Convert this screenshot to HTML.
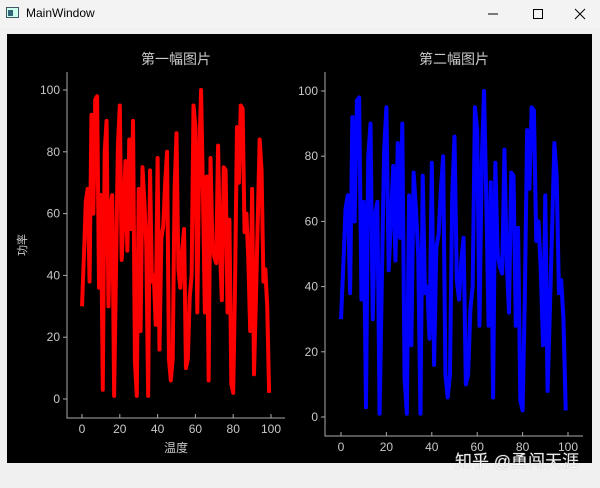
<!DOCTYPE html><html><head><style>
body{margin:0;width:600px;height:488px;background:#f0f0f0;font-family:"Liberation Sans","Noto Sans CJK SC",sans-serif;overflow:hidden;position:relative}
.tb{position:absolute;top:0;left:0;width:600px;height:28px;background:#f3f3f3}
.tt{position:absolute;left:26px;top:6px;font-size:12px;color:#000}
.wm{position:absolute;left:455px;top:447px;font-size:17px;color:#fff;white-space:nowrap;opacity:.92;text-shadow:0 0 1px #888}
</style></head><body>
<div class="tb"><svg style="position:absolute;left:6px;top:7px" width="14" height="12"><rect x="0.5" y="0.5" width="12" height="10" fill="#cfe" stroke="#456"/><rect x="2" y="3" width="5" height="6" fill="#367"/></svg><div class="tt">MainWindow</div>
<svg style="position:absolute;left:488px;top:6px" width="100" height="16"><line x1="0" y1="8" x2="10" y2="8" stroke="#000"/><rect x="45.5" y="3.5" width="9" height="9" fill="none" stroke="#000"/><path d="M87 3l10 10M97 3l-10 10" stroke="#000"/></svg></div>
<svg style="position:absolute;left:7px;top:34px" width="585" height="429" viewBox="7 34 585 429">
<rect x="7" y="34" width="585" height="429" fill="#000"/>
<g font-family="Liberation Sans,Noto Sans CJK SC,sans-serif" fill="#c8c8c8" font-size="12">
<text x="176" y="64" font-size="14" text-anchor="middle">第一幅图片</text>
<text x="454" y="64" font-size="14" text-anchor="middle">第二幅图片</text>
<text x="176" y="452" text-anchor="middle">温度</text>
<text x="26" y="245" text-anchor="middle" transform="rotate(-90 26 245)" font-size="11">功率</text>
<path d="M67 72V418H285" fill="none" stroke="#aaa"/>
<path d="M325 72V436H583" fill="none" stroke="#aaa"/>
<g id="t"></g>
</g>
<polyline id="p1" fill="none" stroke="#f00" stroke-width="4" stroke-linejoin="round"/>
<polyline id="p2" fill="none" stroke="#00f" stroke-width="4" stroke-linejoin="round"/>
</svg>
<div class="wm">知乎 @勇闯天涯</div>
<script>
var d=[30,46,64,68,38,92,60,97,98,36,66,3,80,90,30,62,66,1,42,82,95,45,60,77,48,84,55,90,12,1,68,22,75,64,50,1,74,38,40,24,78,16,52,56,70,80,13,6,13,68,86,42,36,48,55,10,13,33,40,95,88,28,78,100,67,28,72,6,78,50,46,44,82,48,32,75,74,28,58,5,2,38,88,70,95,94,54,60,45,22,68,8,32,58,84,74,38,42,30,2];
var s="",t="",tk="";
for(var i=0;i<100;i++){s+=(82+i*1.89)+","+(399-d[i]*3.09)+" ";t+=(341+i*2.27)+","+(417-d[i]*3.26)+" ";}
document.getElementById('p1').setAttribute('points',s);
document.getElementById('p2').setAttribute('points',t);
for(var k=0;k<=5;k++){var v=k*20;
var y1=399-v*3.09,y2=417-v*3.26,x1=82+v*1.89,x2=341+v*2.27;
tk+='<line x1="63" y1="'+y1+'" x2="67" y2="'+y1+'" stroke="#aaa"/><text x="60" y="'+(y1+4)+'" text-anchor="end">'+v+'</text>';
tk+='<line x1="321" y1="'+y2+'" x2="325" y2="'+y2+'" stroke="#aaa"/><text x="318" y="'+(y2+4)+'" text-anchor="end">'+v+'</text>';
tk+='<line x1="'+x1+'" y1="414" x2="'+x1+'" y2="418" stroke="#aaa"/><text x="'+x1+'" y="433" text-anchor="middle">'+v+'</text>';
tk+='<line x1="'+x2+'" y1="432" x2="'+x2+'" y2="436" stroke="#aaa"/><text x="'+x2+'" y="451" text-anchor="middle">'+v+'</text>';}
document.getElementById('t').innerHTML=tk;
</script>
</body></html>
